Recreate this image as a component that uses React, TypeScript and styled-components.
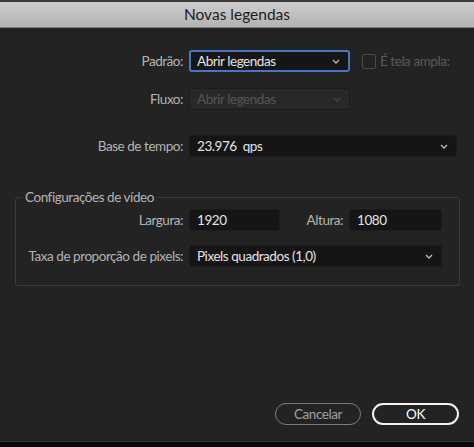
import styled, { createGlobalStyle } from 'styled-components';

const Global = createGlobalStyle`
  html, body {
    margin: 0;
    padding: 0;
    background: #0b0b0b;
  }
  body {
    font-family: Lato, "Open Sans", sans-serif;
  }
`;

const Dialog = styled.div`
  display: flex;
  flex-direction: column;
  width: 474px;
  height: 447px;
  overflow: hidden;
  background: #232323;
`;

const TitleBar = styled.div`
  box-sizing: border-box;
  height: 28px;
  flex: none;
  padding-bottom: 2px;
  border-top: 2px solid #3a3a3a;
  border-bottom: 1px solid #7c7c7c;
  background: linear-gradient(#cdcdcd, #b3b3b3);
  display: flex;
  align-items: center;
  justify-content: center;
  font-size: 15.5px;
  color: #1c1c1c;
`;

const Body = styled.div`
  flex: 1;
  display: flex;
  flex-direction: column;
  padding: 22px 15px 16px;
  font-size: 13.5px;
  letter-spacing: -0.45px;
`;

const Row = styled.div<{ $mt?: number }>`
  display: flex;
  align-items: center;
  gap: 6px;
  height: 22px;
  margin-top: ${p => p.$mt ?? 0}px;
`;

const Label = styled.span<{ $w: number }>`
  width: ${p => p.$w}px;
  flex: none;
  text-align: right;
  color: #b4b4b4;
  white-space: nowrap;
`;

const Field = styled.div<{ $w: number; $focus?: boolean; $disabled?: boolean }>`
  box-sizing: border-box;
  width: ${p => p.$w}px;
  height: 22px;
  flex: none;
  display: flex;
  align-items: center;
  justify-content: space-between;
  padding: 0 8px 0 ${p => (p.$focus ? 6 : 7)}px;
  border-radius: 3px;
  background: ${p => (p.$disabled ? '#282828' : '#151515')};
  border: ${p => (p.$focus ? '2px solid #4676c2' : '1px solid #1c1c1c')};
  color: ${p => (p.$disabled ? '#555555' : '#e4e4e4')};
  white-space: pre;
`;

const Chevron = ({ dim }: { dim?: boolean }) => (
  <svg width="8" height="5" viewBox="0 0 8 5">
    <path d="M1 1l3 3 3-3" fill="none" stroke={dim ? '#444' : '#bdbdbd'} strokeWidth="1.3" />
  </svg>
);

const Check = styled.label`
  display: flex;
  align-items: center;
  gap: 4px;
  margin-left: 6px;
  color: #5a5a5a;
`;

const Box = styled.span`
  box-sizing: border-box;
  width: 14px;
  height: 15px;
  border: 1.5px solid #4a4a4a;
  border-radius: 2px;
`;

const Group = styled.fieldset`
  margin: 32px 0 0;
  padding: 4px 17px 18px 6px;
  border: 1px solid #3a3a3a;
  border-radius: 3px;
  display: flex;
  flex-direction: column;
  gap: 14px;
`;

const Legend = styled.legend`
  padding: 0 3px;
  line-height: 16px;
  color: #b4b4b4;
`;

const Buttons = styled.div`
  margin-top: auto;
  display: flex;
  justify-content: flex-end;
  gap: 11px;
`;

const Button = styled.button<{ $primary?: boolean }>`
  box-sizing: border-box;
  width: ${p => (p.$primary ? 87 : 86)}px;
  height: 22px;
  border-radius: 11px;
  background: transparent;
  border: ${p => (p.$primary ? '2px solid #f2f2f2' : '1.5px solid #7a7a7a')};
  color: ${p => (p.$primary ? '#ffffff' : '#a0a0a0')};
  font-family: inherit;
  font-size: 13.5px;
  letter-spacing: inherit;
  padding: 0;
`;

const Footer = styled.div`
  height: 5px;
  flex: none;
  border-top: 1px solid #333;
  background: #0b0b0b;
`;

export default function App() {
  return (
    <Dialog>
      <Global />
      <TitleBar>Novas legendas</TitleBar>
      <Body>
        <Row>
          <Label $w={168}>Padrão:</Label>
          <Field $w={161} $focus>
            Abrir legendas
            <Chevron />
          </Field>
          <Check>
            <Box />
            É tela ampla:
          </Check>
        </Row>
        <Row $mt={16}>
          <Label $w={168}>Fluxo:</Label>
          <Field $w={161} $disabled>
            Abrir legendas
            <Chevron dim />
          </Field>
        </Row>
        <Row $mt={25}>
          <Label $w={168}>Base de tempo:</Label>
          <Field $w={268}>
            23.976  qps
            <Chevron />
          </Field>
        </Row>
        <Group>
          <Legend>Configurações de vídeo</Legend>
          <Row>
            <Label $w={161}>Largura:</Label>
            <Field $w={91}>1920</Field>
            <Label $w={57}>Altura:</Label>
            <Field $w={93}>1080</Field>
          </Row>
          <Row>
            <Label $w={161}>Taxa de proporção de pixels:</Label>
            <Field $w={253}>
              Pixels quadrados (1,0)
              <Chevron />
            </Field>
          </Row>
        </Group>
        <Buttons>
          <Button>Cancelar</Button>
          <Button $primary>OK</Button>
        </Buttons>
      </Body>
      <Footer />
    </Dialog>
  );
}
